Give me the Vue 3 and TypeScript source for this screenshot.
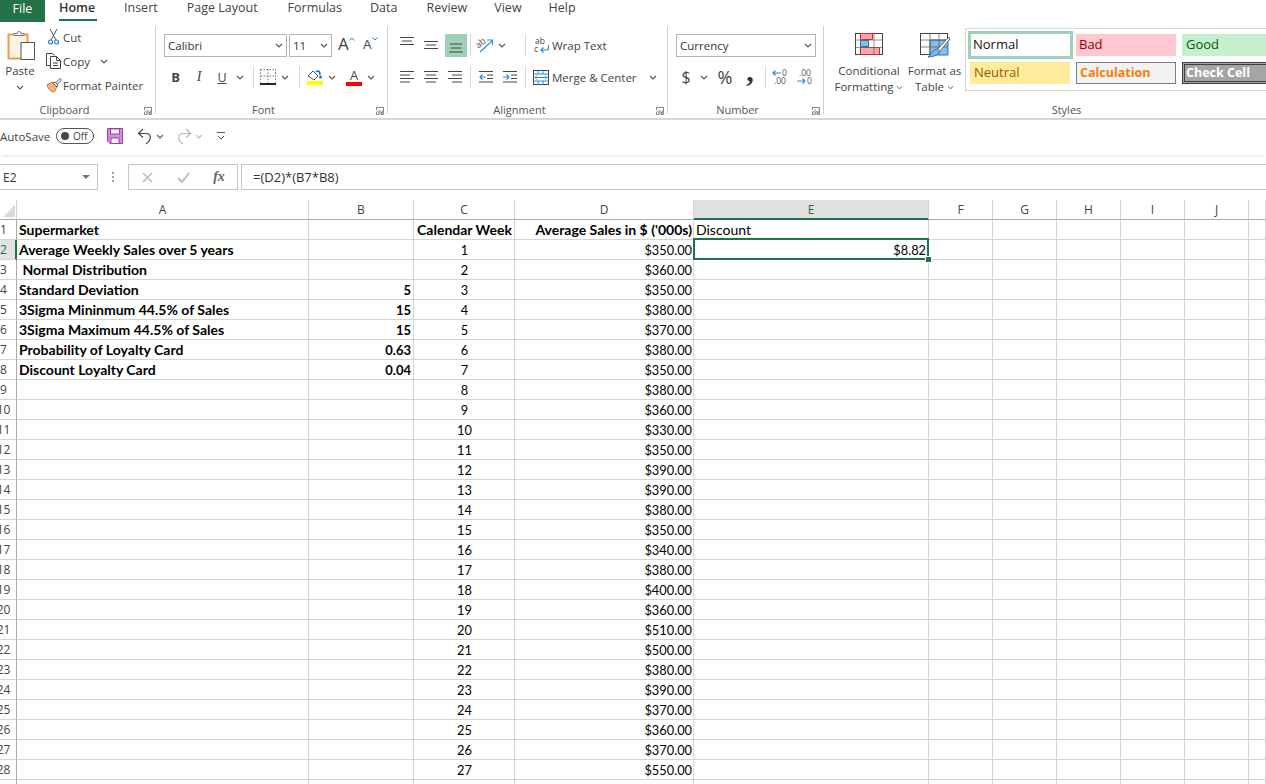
<script setup lang="ts">
const tabs: string[] = ['Insert', 'Page Layout', 'Formulas', 'Data', 'Review', 'View', 'Help']
const columns: string[] = ['A', 'B', 'C', 'D', 'E', 'F', 'G', 'H', 'I', 'J', '']
const sales: number[] = [350, 360, 350, 380, 370, 380, 350, 380, 360, 330, 350, 390, 390, 380, 350, 340, 380, 400, 360, 510, 500, 380, 390, 370, 360, 370, 550]
const labels: Record<number, string> = {
  1: 'Supermarket',
  2: 'Average Weekly Sales over 5 years',
  3: '\u00a0Normal Distribution',
  4: 'Standard Deviation',
  5: '3Sigma Mininmum 44.5% of Sales',
  6: '3Sigma Maximum 44.5% of Sales',
  7: 'Probability of Loyalty Card',
  8: 'Discount Loyalty Card'
}
const bVals: Record<number, string> = { 4: '5', 5: '15', 6: '15', 7: '0.63', 8: '0.04' }
const rows: number[] = Array.from({ length: 29 }, (_, i) => i + 1)
const cVal = (r: number): string => (r === 1 ? 'Calendar Week' : r <= 28 ? String(r - 1) : '')
const dVal = (r: number): string => (r === 1 ? "Average Sales in $ ('000s)" : r <= 28 ? `$${sales[r - 2].toFixed(2)}` : '')
const fillerCols: string[] = ['f', 'g', 'h', 'i', 'j', 'k']
</script>

<template>
  <div class="app">
    <svg class="sprite" width="0" height="0">
      <symbol id="chev" viewBox="0 0 8 5"><path d="M1 1l3 3 3-3" fill="none" stroke="#555" stroke-width="1.1" /></symbol>
      <symbol id="launch" viewBox="0 0 9 9"><path d="M.5 3.500V.5H8.500V8.500H5.500M3 3l4 4M7 4v3H4M.5 5.500h3v3h-3z" fill="none" stroke="#666" stroke-width=".9" /></symbol>
    </svg>

    <nav class="tabs">
      <div class="tab-file">File</div>
      <div class="tab-home">Home</div>
      <div v-for="t in tabs" :key="t" class="tab" :class="'tab-' + t.replace(' ', '')">{{ t }}</div>
    </nav>

    <div class="ribbon">
      <section class="group g-clip">
        <div class="clip-body">
          <div class="paste">
            <svg class="paste-ic" width="30" height="32" viewBox="0 0 30 32">
              <rect x="1.500" y="4.500" width="19" height="24" fill="#fdf3df" stroke="#e2a24a" stroke-width="2" />
              <path d="M7 5.500V3.500h3a2 2 0 0 1 4 0h3v2z" fill="#fff" stroke="#777" />
              <rect x="14" y="12.500" width="13.500" height="17" fill="#fff" stroke="#555" />
            </svg>
            <span class="paste-label">Paste</span>
            <svg class="chev"><use href="#chev" /></svg>
          </div>
          <div class="clip-list">
            <div class="clip-row">
              <span class="clip-ic">
                <svg width="11" height="16" viewBox="0 0 11 16"><path d="M2 0l6 11M9 0L3 11" stroke="#555" fill="none" /><circle cx="2.500" cy="13" r="2" fill="none" stroke="#2a7fc4" stroke-width="1.200" /><circle cx="8.500" cy="13" r="2" fill="none" stroke="#2a7fc4" stroke-width="1.200" /></svg>
              </span>
              Cut
            </div>
            <div class="clip-row">
              <span class="clip-ic">
                <svg width="16" height="16" viewBox="0 0 16 16"><path d="M4 12.500H.5V.5h6l2 2" fill="none" stroke="#444" /><path d="M4.500 3.500h6l4 4v8h-10z" fill="#fff" stroke="#444" /><path d="M10.500 3.500v4h4M7 10h5M7 12.500h5" fill="none" stroke="#444" /></svg>
              </span>
              Copy
              <svg class="chev copy-chev"><use href="#chev" /></svg>
            </div>
            <div class="clip-row">
              <span class="clip-ic">
                <svg width="16" height="15" viewBox="0 0 16 15"><path d="M1 7l5-3 5 5-3 5C5 14 2 11 1 7z" fill="#f4b183" stroke="#d9772a" /><path d="M7 5l2-1 3 3-1 2zM10 4.500l4-4 1.500 1.500-4 4" fill="#fff" stroke="#555" /></svg>
              </span>
              Format Painter
            </div>
          </div>
        </div>
        <div class="g-label">Clipboard</div>
        <svg class="launch"><use href="#launch" /></svg>
      </section>

      <section class="group g-font">
        <div class="font-top">
          <div class="select font-name"><span>Calibri</span><svg class="chev"><use href="#chev" /></svg></div>
          <div class="select font-size"><span>11</span><svg class="chev"><use href="#chev" /></svg></div>
          <div class="grow-a">A<svg width="6" height="4" viewBox="0 0 6 4"><path d="M.5 3.500L3 1l2.500 2.500" fill="none" stroke="#2a7fc4" /></svg></div>
          <div class="shrink-a">A<svg width="6" height="4" viewBox="0 0 6 4"><path d="M.5.500L3 3 5.500.5" fill="none" stroke="#2a7fc4" /></svg></div>
        </div>
        <div class="font-tools">
          <b class="t-b">B</b>
          <i class="t-i">I</i>
          <u class="t-u">U</u>
          <svg class="chev"><use href="#chev" /></svg>
          <span class="sep"></span>
          <svg width="16" height="16" viewBox="0 0 16 16"><path d="M.5.500h15M.5.500v13M15.500.500v13M8 .5v13M.5 7h15" fill="none" stroke="#777" stroke-dasharray="1.500 1.500" /><path d="M0 15h16" stroke="#222" stroke-width="2" /></svg>
          <svg class="chev"><use href="#chev" /></svg>
          <span class="sep"></span>
          <div class="color-ic">
            <svg width="16" height="12" viewBox="0 0 16 12"><path d="M1 7l5-5 5 5-4 4z" fill="#fff" stroke="#555" /><path d="M9 3c2-2 4-1 4 3" fill="none" stroke="#1f6db3" stroke-width="1.600" /><circle cx="13.500" cy="8" r="1.500" fill="#1f6db3" /></svg>
            <span class="bar bar-yellow"></span>
          </div>
          <svg class="chev"><use href="#chev" /></svg>
          <span></span>
          <div class="color-ic color-a"><span class="a-text">A</span><span class="bar bar-red"></span></div>
          <svg class="chev"><use href="#chev" /></svg>
        </div>
        <div class="g-label">Font</div>
        <svg class="launch"><use href="#launch" /></svg>
      </section>

      <section class="group g-align">
        <div class="align-row align-top">
          <svg class="ic-up" width="14" height="9" viewBox="0 0 14 9"><path d="M0 .5h14M2 4h10M0 7.500h14" stroke="#444" /></svg>
          <svg class="ic-mid" width="14" height="9" viewBox="0 0 14 9"><path d="M0 .5h14M2 4h10M0 7.500h14" stroke="#444" /></svg>
          <span class="active-cell"><svg width="14" height="10" viewBox="0 0 14 10"><path d="M1 1h12M2 5h10M0 9h14" stroke="#444" /></svg></span>
          <span class="sep"></span>
          <svg width="18" height="16" viewBox="0 0 18 16"><text x="0" y="9" font-size="9" fill="#555" font-family="Open Sans" transform="rotate(-40 5 7)">ab</text><path d="M4 15L16 4M11 3h5.500v5" fill="none" stroke="#2a8fd4" stroke-width="1.200" /></svg>
          <svg class="chev"><use href="#chev" /></svg>
          <span></span>
          <span class="sep"></span>
          <div class="wide-btn wrap-btn">
            <svg width="16" height="17" viewBox="0 0 16 17"><text x="1" y="7" font-size="8.500" fill="#444" font-family="Open Sans">ab</text><text x="0" y="15" font-size="8.500" fill="#444" font-family="Open Sans">c</text><path d="M14.500 8v3a2 2 0 0 1-2 2H7M9.500 10.500L7 13l2.500 2.500" fill="none" stroke="#2a8fd4" stroke-width="1.200" /></svg>
            <span>Wrap Text</span>
          </div>
        </div>
        <div class="align-row align-bottom">
          <svg width="14" height="12" viewBox="0 0 14 12"><path d="M0 .5h14M0 4h10M0 7.500h14M0 11h10" stroke="#444" /></svg>
          <svg width="14" height="12" viewBox="0 0 14 12"><path d="M0 .5h14M2 4h10M0 7.500h14M2 11h10" stroke="#444" /></svg>
          <svg width="14" height="12" viewBox="0 0 14 12"><path d="M0 .5h14M4 4h10M0 7.500h14M4 11h10" stroke="#444" /></svg>
          <span class="sep"></span>
          <svg width="14" height="12" viewBox="0 0 14 12"><path d="M0 .5h14M8 4h6M8 7.500h6M0 11h14" stroke="#444" /><path d="M7 6H1M3.500 3.500L1 6l2.500 2.500" fill="none" stroke="#2a8fd4" stroke-width="1.200" /></svg>
          <svg width="14" height="12" viewBox="0 0 14 12"><path d="M0 .5h14M8 4h6M8 7.500h6M0 11h14" stroke="#444" /><path d="M0 6h6M3.500 3.500L6 6 3.500 8.500" fill="none" stroke="#2a8fd4" stroke-width="1.200" /></svg>
          <span class="sep"></span>
          <span></span>
          <div class="wide-btn merge-btn">
            <svg width="16" height="15" viewBox="0 0 16 15"><rect x=".5" y=".5" width="15" height="14" fill="#fff" stroke="#444" /><path d="M.5 4h15M.5 11h15M5 .5V4M10 .5V4M5 11v3.500M10 11v3.500" stroke="#2a8fd4" /><path d="M2 7.500h12M4 5.500L2 7.500l2 2M12 5.500l2 2-2 2" fill="none" stroke="#2a8fd4" /></svg>
            <span>Merge &amp; Center</span>
            <svg class="chev merge-chev"><use href="#chev" /></svg>
          </div>
        </div>
        <div class="g-label">Alignment</div>
        <svg class="launch"><use href="#launch" /></svg>
      </section>

      <section class="group g-num">
        <div class="select num-format"><span>Currency</span><svg class="chev"><use href="#chev" /></svg></div>
        <div class="num-tools">
          <span class="t-dollar">$</span>
          <svg class="chev"><use href="#chev" /></svg>
          <span class="t-pct">%</span>
          <span class="t-comma">,</span>
          <span class="sep"></span>
          <svg class="dec-ic" width="18" height="16" viewBox="0 0 18 16"><text x="10" y="7" font-size="8.500" fill="#555" font-family="Open Sans">0</text><text x="2" y="15" font-size="8.500" fill="#555" font-family="Open Sans">.00</text><path d="M9 4H1M3.500 1.500L1 4l2.500 2.500" fill="none" stroke="#2a8fd4" stroke-width="1.200" /></svg>
          <svg class="dec-ic" width="18" height="16" viewBox="0 0 18 16"><text x="3" y="7" font-size="8.500" fill="#555" font-family="Open Sans">.00</text><text x="11" y="15" font-size="8.500" fill="#555" font-family="Open Sans">0</text><path d="M1 12h8M6.500 9.500L9 12l-2.500 2.500" fill="none" stroke="#2a8fd4" stroke-width="1.200" /></svg>
        </div>
        <div class="g-label">Number</div>
        <svg class="launch"><use href="#launch" /></svg>
      </section>

      <section class="group g-styles">
        <div class="styles-body">
          <div class="big-btn btn-cond">
            <div class="big-ic">
              <svg width="28" height="22" viewBox="0 0 28 22">
                <rect x=".5" y=".5" width="27" height="21" fill="#fff" stroke="#444" />
                <path d="M5.500.5h12v6h-12zM5.500 14.500h19v7h-19z" fill="#f8a6ae" stroke="#d8232a" />
                <rect x="5.500" y="7.500" width="8" height="6" fill="#85bcec" stroke="#2e75b6" />
                <path d="M19 .5v21M.5 7h27M.5 14.500h27" stroke="#666" fill="none" stroke-width=".7" />
              </svg>
            </div>
            <span>Conditional</span>
            <span>Formatting <svg class="chev inline-chev"><use href="#chev" /></svg></span>
          </div>
          <div class="big-btn btn-table">
            <div class="big-ic">
              <svg width="30" height="26" viewBox="0 0 30 26">
                <rect x=".5" y=".5" width="27" height="21" fill="#fff" stroke="#444" />
                <path d="M10 7h18v15H10z" fill="#85bcec" stroke="#2e75b6" />
                <path d="M10 .5v21M19 .5v21M.5 7h27M.5 14h27" stroke="#555" fill="none" stroke-width=".7" />
                <path d="M29 4L17 17l2 2L30 6z" fill="#fff" stroke="#666" />
                <path d="M16 16c3 0 4 2 3 4s-6 4-11 4c3-2 4-7 8-8z" fill="#7fb4e0" stroke="#2e75b6" />
              </svg>
            </div>
            <span>Format as</span>
            <span>Table <svg class="chev inline-chev"><use href="#chev" /></svg></span>
          </div>
          <div class="gallery">
            <div class="st st-normal">Normal</div>
            <div class="st st-bad">Bad</div>
            <div class="st st-good">Good</div>
            <div class="st st-neutral">Neutral</div>
            <div class="st st-calc">Calculation</div>
            <div class="st st-check">Check Cell</div>
          </div>
        </div>
        <div class="g-label">Styles</div>
      </section>
    </div>

    <div class="qat">
      <span class="autosave">AutoSave</span>
      <span class="toggle"><i class="dot"></i>Off</span>
      <svg class="save" width="16" height="16" viewBox="0 0 16 16"><path d="M.5.500h15v15H3L.5 13z" fill="#d08fd8" stroke="#a23ba8" /><rect x="3.500" y="1" width="9" height="5" fill="#fff" stroke="#a23ba8" /><rect x="4" y="10" width="8" height="5.500" fill="#fff" stroke="#a23ba8" /></svg>
      <svg class="undo" width="16" height="17" viewBox="0 0 16 17"><path d="M6 1L1.500 5.500 6 9.500M1.500 5.500H9C14 5.500 15.500 11 9 16" fill="none" stroke="#444" stroke-width="1.200" /></svg>
      <svg class="chev q-chev1"><use href="#chev" /></svg>
      <svg class="redo" width="16" height="17" viewBox="0 0 16 17"><path d="M10 1l4.500 4.500L10 9.500M14.500 5.500H7C2 5.500 .5 11 7 16" fill="none" stroke="#b5b5b5" stroke-width="1.200" /></svg>
      <svg class="chev q-chev2 faded"><use href="#chev" /></svg>
      <svg class="custom" width="8" height="9" viewBox="0 0 8 9"><path d="M0 .5h8M1 4l3 3 3-3" fill="none" stroke="#555" /></svg>
    </div>

    <div class="formula">
      <div class="name-box"><span>E2</span><i class="name-caret"></i></div>
      <div class="dots"><i></i><i></i><i></i></div>
      <div class="fx-box">
        <svg width="11" height="11" viewBox="0 0 11 11"><path d="M1 1l9 9M10 1l-9 9" stroke="#bdbdbd" stroke-width="1.600" /></svg>
        <svg width="13" height="11" viewBox="0 0 13 11"><path d="M1 6l4 4 7-9" fill="none" stroke="#bdbdbd" stroke-width="2" /></svg>
        <span class="fx">fx</span>
      </div>
      <div class="f-input">=(D2)*(B7*B8)</div>
    </div>

    <div class="sheet">
      <div class="corner"><i></i></div>
      <div v-for="c in columns" :key="c || 'end'" class="col-head" :class="{ 'col-active': c === 'E' }">{{ c }}</div>

      <template v-for="r in rows" :key="r">
        <div class="row-head" :class="{ 'row-active': r === 2 }"><span>{{ r }}</span></div>
        <div class="cell bold">{{ labels[r] }}</div>
        <div class="cell bold right num-b">{{ bVals[r] }}</div>
        <div class="cell center" :class="r === 1 ? 'bold' : 'num'">{{ cVal(r) }}</div>
        <div class="cell right" :class="r === 1 ? 'bold' : 'num'">{{ dVal(r) }}</div>
        <div class="cell" :class="{ 'right num selected': r === 2 }">
          {{ r === 1 ? 'Discount' : r === 2 ? '$8.82' : '' }}
          <template v-if="r === 2"><i class="sel-box"></i><i class="handle"></i></template>
        </div>
        <div v-for="f in fillerCols" :key="f" class="cell"></div>
      </template>
    </div>
  </div>
</template>

<style scoped>
.app {
  width: 1266px;
  height: 784px;
  overflow: hidden;
  background: #fff;
  font-family: "Open Sans", "Noto Sans", sans-serif;
  font-size: 11.5px;
  color: #444;
  display: flex;
  flex-direction: column;
}
.sprite { position: absolute; }
.chev { width: 8px; height: 5px; flex: none; justify-self: center; }
.faded { opacity: .4; }

/* Tabs */
.tabs { height: 22px; flex: none; display: flex; font-size: 12.5px; }
.tab-file { width: 45px; height: 22px; background: #217346; color: #fff; text-align: center; line-height: 17px; }
.tab-home { margin-left: 14px; width: 38px; height: 19px; line-height: 15px; color: #333; font-weight: 600; border-bottom: 2px solid #217346; white-space: nowrap; }
.tab { line-height: 15px; white-space: nowrap; }
.tab-Insert { margin-left: 27px; }
.tab-PageLayout { margin-left: 29px; }
.tab-Formulas { margin-left: 30px; }
.tab-Data { margin-left: 28px; }
.tab-Review { margin-left: 29px; }
.tab-View { margin-left: 27px; }
.tab-Help { margin-left: 27px; }

/* Ribbon */
.ribbon { height: 98px; flex: none; display: flex; border-bottom: 2px solid #d6d6d6; box-sizing: border-box; padding-top: 4px; }
.group { position: relative; height: 88px; box-sizing: border-box; border-right: 1px solid #d0d0d0; flex: none; }
.g-clip { width: 156px; }
.g-font { width: 232px; padding-left: 8px; }
.g-align { width: 280px; padding-left: 7px; }
.g-num { width: 156px; padding-left: 8px; }
.g-styles { flex: 1; border-right: 0; }
.g-label { position: absolute; left: 0; right: 16px; top: 76px; text-align: center; font-size: 11px; line-height: 15px; color: #555; }
.g-clip .g-label { right: 26px; }
.g-styles .g-label { left: 30px; right: 0; }
.launch { position: absolute; right: 3px; top: 81px; width: 8px; height: 8px; }
.sep { width: 1px; height: 22px; background: #d8d8d8; justify-self: center; }

/* Clipboard */
.clip-body { display: flex; padding-left: 5px; }
.paste { width: 30px; display: flex; flex-direction: column; align-items: center; padding-top: 4px; }
.paste-ic { margin-left: 4px; flex: none; }
.paste-label { line-height: 14px; margin-top: 2px; white-space: nowrap; }
.paste .chev { margin-top: 7px; }
.clip-list { margin-left: 9px; margin-top: -1px; }
.clip-row { display: flex; align-items: center; height: 24px; white-space: nowrap; }
.clip-ic { width: 19px; display: flex; justify-content: center; }
.copy-chev { margin-left: 10px; }

/* Font */
.select { border: 1px solid #b5b5b5; height: 23px; box-sizing: border-box; display: flex; align-items: center; justify-content: space-between; padding: 0 3px; color: #333; background: #fff; flex: none; }
.font-top { display: flex; padding-top: 8px; align-items: center; }
.font-name { width: 123px; }
.font-size { width: 43px; margin-left: 2px; }
.grow-a { margin-left: 6px; width: 25px; font-size: 17px; display: flex; align-items: flex-start; color: #444; line-height: 20px; margin-top: -3px; }
.shrink-a { width: 16px; font-size: 13.500px; display: flex; align-items: flex-start; color: #444; line-height: 20px; margin-top: -3px; }
.grow-a svg, .shrink-a svg { margin-top: 3px; }
.font-tools {
  display: grid;
  grid-template-columns: 23px 24px 22px 14px 12px 18px 16px 12px 20px 14px 5px 20px 14px;
  align-items: center;
  justify-items: center;
  height: 24px;
  margin-top: 8px;
}
.t-b { font-size: 13px; color: #444; }
.t-i { font-family: "Liberation Serif", serif; font-size: 14px; color: #444; }
.t-u { font-size: 12.500px; color: #444; }
.color-ic { display: flex; flex-direction: column; align-items: center; width: 16px; }
.bar { display: block; width: 16px; height: 4px; }
.bar-yellow { background: #ffff00; }
.bar-red { background: #ff0000; }
.a-text { font-size: 13px; line-height: 13px; color: #444; }

/* Alignment */
.align-row { display: grid; align-items: center; justify-items: center; height: 24px; }
.align-top { grid-template-columns: 24px 24px 25px 4px 26px 8px 12px 14px auto; margin-top: 7px; }
.align-bottom { grid-template-columns: 24px 24px 24px 6px 26px 22px 8px 4px auto; margin-top: 8px; }
.ic-up { margin-bottom: 8px; }
.active-cell { width: 22px; height: 23px; background: #a0d1b6; display: flex; align-items: center; justify-content: center; padding-top: 6px; box-sizing: border-box; }
.wide-btn { display: flex; align-items: center; white-space: nowrap; color: #444; justify-self: start; }
.wrap-btn { padding-left: 2px; gap: 2px; }
.merge-btn { gap: 3px; }
.merge-chev { margin-left: 9px; }

/* Number */
.num-format { width: 140px; margin-top: 8px; }
.num-tools {
  display: grid;
  grid-template-columns: 20px 16px 26px 24px 6px 26px 22px;
  align-items: center;
  justify-items: center;
  height: 24px;
  margin-top: 8px;
}
.t-dollar { font-size: 16px; color: #444; }
.t-pct { font-size: 18px; color: #444; }
.t-comma { font-family: "Liberation Serif", serif; font-weight: 700; font-size: 30px; line-height: 12px; height: 24px; color: #333; }
.dec-ic { overflow: visible; }

/* Styles */
.styles-body { display: flex; }
.big-btn { display: flex; flex-direction: column; align-items: center; white-space: nowrap; line-height: 16px; flex: none; margin-top: 7px; }
.big-ic { height: 30px; }
.btn-cond { width: 90px; }
.btn-table { width: 51px; margin-left: -5px; margin-right: 5px; }
.inline-chev { display: inline-block; vertical-align: 1px; width: 7px; }
.gallery {
  margin-top: 2px;
  flex: 1;
  height: 63px;
  box-sizing: border-box;
  border: 1px solid #d8d8d8;
  border-right: 0;
  display: grid;
  grid-template-columns: 105px 100px 100px;
  grid-template-rows: 28px 28px;
  column-gap: 3px;
  padding: 2px 0 0 2px;
  overflow: hidden;
  font-size: 13px;
}
.st { box-sizing: border-box; display: flex; align-items: center; white-space: nowrap; padding-bottom: 2px; }
.st-normal { border: 3px solid #a0d1b6; color: #111; padding-left: 2px; background: #fff; padding-bottom: 3px; }
.st-bad { background: #ffc7ce; color: #9c0006; margin: 3px 0 0; padding-left: 3px; height: 22px; }
.st-good { background: #c6efce; color: #006100; margin: 3px 0 0 3px; padding-left: 4px; height: 22px; width: 100px; }
.st-neutral { background: #ffeb9c; color: #9c5700; margin: 3px 3px 3px 2px; padding-left: 4px; height: 22px; }
.st-calc { background: #f2f2f2; border: 1px solid #7f7f7f; color: #fa7d00; font-weight: 700; margin-top: 3px; padding-left: 3px; height: 22px; font-size: 12.500px; padding-bottom: 2px; }
.st-check { background: #a5a5a5; border: 3px double #3f3f3f; color: #fff; font-weight: 700; margin: 3px 0 0 3px; padding-left: 1px; height: 22px; width: 100px; font-size: 12.500px; padding-bottom: 1px; }

/* QAT */
.qat { height: 35px; flex: none; display: flex; align-items: center; box-shadow: 0 3px 3px -2px #e2e2e2; box-sizing: border-box; padding-bottom: 3px; }
.autosave { width: 56px; white-space: nowrap; }
.toggle { width: 38px; height: 16px; box-sizing: border-box; border: 1px solid #555; border-radius: 8px; display: flex; align-items: center; font-size: 10px; padding-left: 4px; gap: 4px; }
.dot { width: 8px; height: 8px; background: #444; border-radius: 50%; }
.save { margin-left: 13px; }
.undo { margin-left: 14px; }
.q-chev1 { margin-left: 3px; }
.redo { margin-left: 12px; }
.q-chev2 { margin-left: 3px; }
.custom { margin-left: 14px; }

/* Formula bar */
.formula { height: 26px; flex: none; margin-top: 9px; display: flex; align-items: stretch; font-size: 13px; color: #333; }
.name-box { width: 98px; box-sizing: border-box; border: 1px solid #c6c6c6; border-left: 0; display: flex; align-items: center; justify-content: space-between; padding: 0 7px 0 3px; font-size: 12px; }
.name-caret { width: 0; height: 0; border-left: 4px solid transparent; border-right: 4px solid transparent; border-top: 4px solid #777; }
.dots { width: 30px; display: flex; flex-direction: column; align-items: center; justify-content: center; gap: 2px; }
.dots i { width: 2px; height: 2px; background: #a0a0a0; }
.fx-box { width: 110px; box-sizing: border-box; border: 1px solid #c6c6c6; display: grid; grid-template-columns: 36px 36px 36px; align-items: center; justify-items: center; }
.fx { font-family: "Liberation Serif", serif; font-style: italic; font-weight: 700; font-size: 14px; color: #666; }
.f-input { flex: 1; margin-left: 3px; border: 1px solid #c6c6c6; border-right: 0; padding-left: 11px; display: flex; align-items: center; }

/* Sheet */
.sheet {
  margin-top: 10px;
  display: grid;
  grid-template-columns: 17px 292px 105px 101px 179px 235px 64px 64px 64px 64px 64px 17px;
  grid-auto-rows: 20px;
  font-family: Lato, "Liberation Sans", sans-serif;
  font-size: 14px;
  color: #000;
}
.corner { border-right: 1px solid #d4d4d4; border-bottom: 1px solid #ababab; box-sizing: border-box; position: relative; overflow: hidden; }
.corner i { position: absolute; right: 1px; bottom: 2px; width: 0; height: 0; border-left: 12px solid transparent; border-bottom: 12px solid #d9d9d9; }
.col-head { border-right: 1px solid #d4d4d4; border-bottom: 1px solid #ababab; box-sizing: border-box; text-align: center; font-family: "Open Sans", sans-serif; font-size: 12px; line-height: 19px; color: #444; }
.col-active { background: #e1e1e1; color: #217346; border-bottom: 2px solid #217346; }
.row-head { border-right: 1px solid #ababab; border-bottom: 1px solid #d4d4d4; box-sizing: border-box; overflow: hidden; display: flex; font-family: "Open Sans", sans-serif; font-size: 12px; line-height: 20px; color: #444; }
.row-head span { width: 7px; flex: none; display: flex; justify-content: center; white-space: nowrap; }
.row-active { background: #e1e1e1; color: #217346; border-right: 2px solid #217346; }
.cell { position: relative; border-right: 1px solid #d4d4d4; border-bottom: 1px solid #d4d4d4; box-sizing: border-box; padding: 0 1px 0 2px; line-height: 20px; white-space: nowrap; }
.bold { font-weight: 700; }
.right { text-align: right; }
.center { text-align: center; }
.num { font-size: 12.800px; }
.num-b { font-size: 13px; padding-right: 2px; }
.selected { padding-right: 2px; }
.sel-box { position: absolute; left: -1px; top: -2px; width: 236px; height: 22px; box-sizing: border-box; border: 2px solid #217346; z-index: 1; pointer-events: none; }
.handle { position: absolute; right: -4px; top: 16px; width: 5px; height: 5px; background: #217346; border: 1px solid #fff; z-index: 2; box-sizing: content-box; }
</style>
